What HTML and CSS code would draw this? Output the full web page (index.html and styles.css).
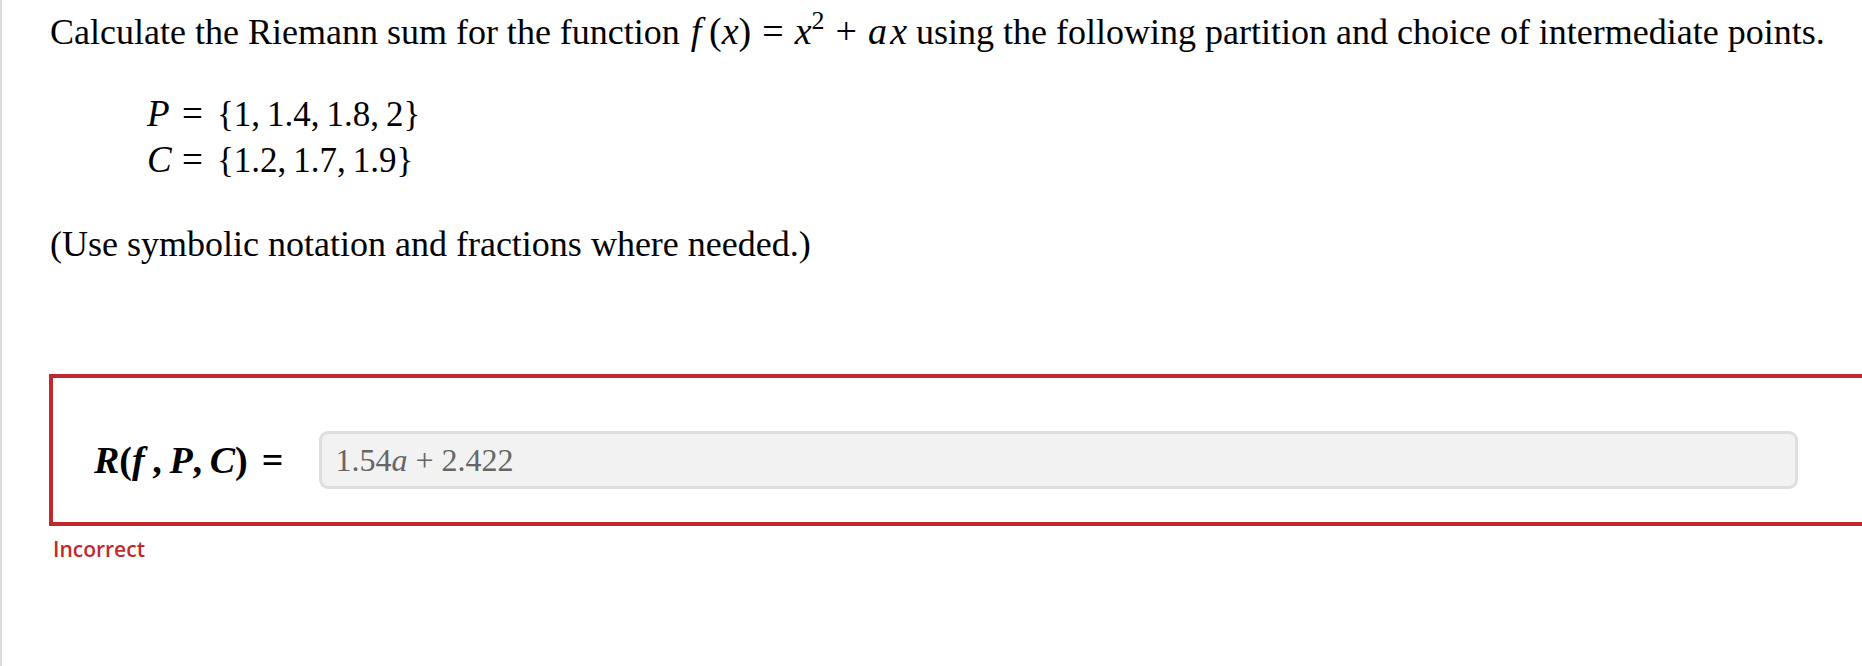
FILE: index.html
```html
<!DOCTYPE html>
<html lang="en">
<head>
<meta charset="utf-8">
<title>Riemann sum</title>
<link rel="stylesheet" href="styles.css">
</head>
<body>
<div class="page">
  <p class="prompt">Calculate the Riemann sum for the function <span class="math"><i>f</i>&thinsp;(<i>x</i>)<span class="op">=</span><i>x</i><sup>2</sup><span class="op">+</span><i>a</i>&hairsp;<i>x</i></span> using the following partition and choice of intermediate points.</p>
  <div class="sets">
    <div class="set-row"><i class="var">P</i><span class="op">=</span><span>{1,&thinsp;1.4,&thinsp;1.8,&thinsp;2}</span></div>
    <div class="set-row"><i class="var">C</i><span class="op">=</span><span>{1.2,&thinsp;1.7,&thinsp;1.9}</span></div>
  </div>
  <p class="note">(Use symbolic notation and fractions where needed.)</p>
  <div class="answer">
    <span class="label"><i>R</i>(<i>f</i>&thinsp;,&thinsp;<i>P</i>,&thinsp;<i>C</i>)<span class="op">=</span></span>
    <div class="input">1.54<i>a</i><span class="op-sm">+</span>2.422</div>
  </div>
  <div class="feedback">Incorrect</div>
</div>
</body>
</html>
```

FILE: styles.css
```css
html, body {
  margin: 0;
  padding: 0;
  background: #ffffff;
  overflow: hidden;
}

.page {
  min-height: 666px;
  border-left: 2px solid #dcdcdc;
  padding: 9px 0 0 48px;
  font-family: "Liberation Serif", "Times New Roman", serif;
  color: #000000;
  font-size: 36px;
}

.prompt {
  margin: 0;
  height: 44px;
  line-height: 44px;
  white-space: nowrap;
}

.math {
  font-size: 38px;
  padding-left: 2px;
}

.math i, .set-row i, .label i, .input i {
  font-style: italic;
}

.math sup {
  font-size: 26px;
  line-height: 0;
  vertical-align: 15px;
}

.math .op {
  padding: 0 11px;
}

.sets {
  margin: 38px 0 0 97px;
  font-size: 35px;
  line-height: 46px;
}

.set-row {
  display: flex;
  align-items: baseline;
  height: 46px;
}

.set-row .var {
  width: 29px;
  font-size: 37px;
}

.set-row .op {
  padding: 0 14px 0 6px;
  font-size: 37px;
}

.note {
  margin: 39px 0 0 0;
  height: 44px;
  line-height: 44px;
}

.answer {
  margin: 108px -40px 0 -1px;
  border: 4px solid #c1292e;
  padding: 53px 100px 33px 41px;
  display: flex;
  align-items: center;
  gap: 36px;
}

.label {
  font-weight: bold;
  font-size: 38px;
  line-height: 44px;
  white-space: nowrap;
}

.label .op {
  padding-left: 14px;
}

.input {
  flex: 1;
  height: 52px;
  border: 3px solid #dedede;
  border-radius: 9px;
  background: #f2f2f2;
  padding: 0 13px;
  display: flex;
  align-items: center;
  font-size: 32px;
  color: #666666;
}

.op-sm {
  padding: 0 8px;
}

.feedback {
  margin: 9px 0 0 3px;
  font-family: "Open Sans", "Liberation Sans", sans-serif;
  font-weight: 600;
  font-size: 21px;
  line-height: 28px;
  color: #c1292e;
}
```
